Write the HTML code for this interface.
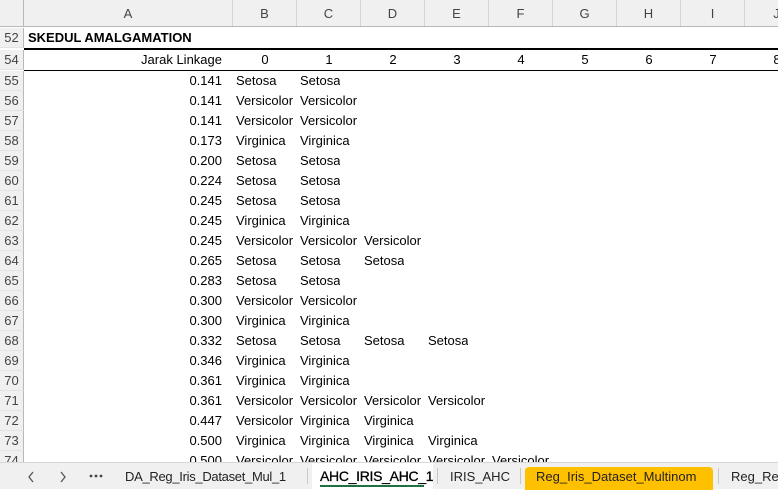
<!DOCTYPE html>
<html><head><meta charset="utf-8"><style>
*{margin:0;padding:0;box-sizing:border-box}
body{width:778px;height:489px;overflow:hidden;background:#fff;font-family:"Liberation Sans",sans-serif;font-size:13px;color:#000;position:relative}
.hdr{position:absolute;top:0;left:0;width:778px;height:27px;background:#f0f0f0;border-bottom:1px solid #b8b8b8}
.hdr div{position:absolute;top:0;height:26px;line-height:27px;text-align:center;color:#444;border-right:1px solid #d4d4d4}
.rh{position:absolute;left:0;width:24px;background:#f0f0f0;border-right:1px solid #b8b8b8;color:#444;text-align:center;line-height:20px;height:20px;border-bottom:1px solid #e4e4e4}
.c{position:absolute;height:20px;line-height:20px;white-space:nowrap;overflow:hidden}
.n{text-align:right}
.tabs{position:absolute;top:462px;left:0;width:778px;height:27px;background:#f0f0f0;border-top:1px solid #d8d8d8;font-size:13px;color:#222}
.tabs div{position:absolute;white-space:nowrap}
</style></head><body>
<div class="hdr">
<div style="left:0;width:24px;border-right:1px solid #b8b8b8"></div>
<div style="left:24px;width:209px">A</div>
<div style="left:233px;width:64px">B</div>
<div style="left:297px;width:64px">C</div>
<div style="left:361px;width:64px">D</div>
<div style="left:425px;width:64px">E</div>
<div style="left:489px;width:64px">F</div>
<div style="left:553px;width:64px">G</div>
<div style="left:617px;width:64px">H</div>
<div style="left:681px;width:64px">I</div>
<div style="left:745px;width:64px">J</div>
</div>
<div class="rh" style="top:28px">52</div>
<div class="c" style="top:28px;left:28px;font-weight:bold">SKEDUL AMALGAMATION</div>
<div style="position:absolute;left:24px;top:48px;width:754px;height:2px;background:#000"></div>
<div class="rh" style="top:50px">54</div>
<div class="c n" style="top:50px;left:24px;width:198px">Jarak Linkage</div>
<div class="c" style="top:50px;left:233px;width:64px;text-align:center">0</div>
<div class="c" style="top:50px;left:297px;width:64px;text-align:center">1</div>
<div class="c" style="top:50px;left:361px;width:64px;text-align:center">2</div>
<div class="c" style="top:50px;left:425px;width:64px;text-align:center">3</div>
<div class="c" style="top:50px;left:489px;width:64px;text-align:center">4</div>
<div class="c" style="top:50px;left:553px;width:64px;text-align:center">5</div>
<div class="c" style="top:50px;left:617px;width:64px;text-align:center">6</div>
<div class="c" style="top:50px;left:681px;width:64px;text-align:center">7</div>
<div class="c" style="top:50px;left:745px;width:64px;text-align:center">8</div>
<div style="position:absolute;left:24px;top:70px;width:754px;height:1px;background:#000"></div>

<div class="rh" style="top:71px">55</div><div class="c n" style="top:71px;left:24px;width:198px">0.141</div><div class="c" style="top:71px;left:236px;width:61px">Setosa</div><div class="c" style="top:71px;left:300px">Setosa</div>
<div class="rh" style="top:91px">56</div><div class="c n" style="top:91px;left:24px;width:198px">0.141</div><div class="c" style="top:91px;left:236px;width:61px">Versicolor</div><div class="c" style="top:91px;left:300px">Versicolor</div>
<div class="rh" style="top:111px">57</div><div class="c n" style="top:111px;left:24px;width:198px">0.141</div><div class="c" style="top:111px;left:236px;width:61px">Versicolor</div><div class="c" style="top:111px;left:300px">Versicolor</div>
<div class="rh" style="top:131px">58</div><div class="c n" style="top:131px;left:24px;width:198px">0.173</div><div class="c" style="top:131px;left:236px;width:61px">Virginica</div><div class="c" style="top:131px;left:300px">Virginica</div>
<div class="rh" style="top:151px">59</div><div class="c n" style="top:151px;left:24px;width:198px">0.200</div><div class="c" style="top:151px;left:236px;width:61px">Setosa</div><div class="c" style="top:151px;left:300px">Setosa</div>
<div class="rh" style="top:171px">60</div><div class="c n" style="top:171px;left:24px;width:198px">0.224</div><div class="c" style="top:171px;left:236px;width:61px">Setosa</div><div class="c" style="top:171px;left:300px">Setosa</div>
<div class="rh" style="top:191px">61</div><div class="c n" style="top:191px;left:24px;width:198px">0.245</div><div class="c" style="top:191px;left:236px;width:61px">Setosa</div><div class="c" style="top:191px;left:300px">Setosa</div>
<div class="rh" style="top:211px">62</div><div class="c n" style="top:211px;left:24px;width:198px">0.245</div><div class="c" style="top:211px;left:236px;width:61px">Virginica</div><div class="c" style="top:211px;left:300px">Virginica</div>
<div class="rh" style="top:231px">63</div><div class="c n" style="top:231px;left:24px;width:198px">0.245</div><div class="c" style="top:231px;left:236px;width:61px">Versicolor</div><div class="c" style="top:231px;left:300px;width:61px">Versicolor</div><div class="c" style="top:231px;left:364px">Versicolor</div>
<div class="rh" style="top:251px">64</div><div class="c n" style="top:251px;left:24px;width:198px">0.265</div><div class="c" style="top:251px;left:236px;width:61px">Setosa</div><div class="c" style="top:251px;left:300px;width:61px">Setosa</div><div class="c" style="top:251px;left:364px">Setosa</div>
<div class="rh" style="top:271px">65</div><div class="c n" style="top:271px;left:24px;width:198px">0.283</div><div class="c" style="top:271px;left:236px;width:61px">Setosa</div><div class="c" style="top:271px;left:300px">Setosa</div>
<div class="rh" style="top:291px">66</div><div class="c n" style="top:291px;left:24px;width:198px">0.300</div><div class="c" style="top:291px;left:236px;width:61px">Versicolor</div><div class="c" style="top:291px;left:300px">Versicolor</div>
<div class="rh" style="top:311px">67</div><div class="c n" style="top:311px;left:24px;width:198px">0.300</div><div class="c" style="top:311px;left:236px;width:61px">Virginica</div><div class="c" style="top:311px;left:300px">Virginica</div>
<div class="rh" style="top:331px">68</div><div class="c n" style="top:331px;left:24px;width:198px">0.332</div><div class="c" style="top:331px;left:236px;width:61px">Setosa</div><div class="c" style="top:331px;left:300px;width:61px">Setosa</div><div class="c" style="top:331px;left:364px;width:61px">Setosa</div><div class="c" style="top:331px;left:428px">Setosa</div>
<div class="rh" style="top:351px">69</div><div class="c n" style="top:351px;left:24px;width:198px">0.346</div><div class="c" style="top:351px;left:236px;width:61px">Virginica</div><div class="c" style="top:351px;left:300px">Virginica</div>
<div class="rh" style="top:371px">70</div><div class="c n" style="top:371px;left:24px;width:198px">0.361</div><div class="c" style="top:371px;left:236px;width:61px">Virginica</div><div class="c" style="top:371px;left:300px">Virginica</div>
<div class="rh" style="top:391px">71</div><div class="c n" style="top:391px;left:24px;width:198px">0.361</div><div class="c" style="top:391px;left:236px;width:61px">Versicolor</div><div class="c" style="top:391px;left:300px;width:61px">Versicolor</div><div class="c" style="top:391px;left:364px;width:61px">Versicolor</div><div class="c" style="top:391px;left:428px">Versicolor</div>
<div class="rh" style="top:411px">72</div><div class="c n" style="top:411px;left:24px;width:198px">0.447</div><div class="c" style="top:411px;left:236px;width:61px">Versicolor</div><div class="c" style="top:411px;left:300px;width:61px">Virginica</div><div class="c" style="top:411px;left:364px">Virginica</div>
<div class="rh" style="top:431px">73</div><div class="c n" style="top:431px;left:24px;width:198px">0.500</div><div class="c" style="top:431px;left:236px;width:61px">Virginica</div><div class="c" style="top:431px;left:300px;width:61px">Virginica</div><div class="c" style="top:431px;left:364px;width:61px">Virginica</div><div class="c" style="top:431px;left:428px">Virginica</div>
<div class="rh" style="top:451px">74</div><div class="c n" style="top:451px;left:24px;width:198px">0.500</div><div class="c" style="top:451px;left:236px;width:61px">Versicolor</div><div class="c" style="top:451px;left:300px;width:61px">Versicolor</div><div class="c" style="top:451px;left:364px;width:61px">Versicolor</div><div class="c" style="top:451px;left:428px;width:61px">Versicolor</div><div class="c" style="top:451px;left:492px">Versicolor</div>

<div class="tabs">
<svg style="position:absolute;left:27px;top:8px" width="8" height="12"><path d="M6 1L2 6L6 11" fill="none" stroke="#555" stroke-width="1.3"/></svg>
<svg style="position:absolute;left:59px;top:8px" width="8" height="12"><path d="M2 1L6 6L2 11" fill="none" stroke="#555" stroke-width="1.3"/></svg>
<svg style="position:absolute;left:89px;top:11px" width="14" height="4"><circle cx="2" cy="2" r="1.4" fill="#444"/><circle cx="7" cy="2" r="1.4" fill="#444"/><circle cx="12" cy="2" r="1.4" fill="#444"/></svg>
<div style="left:125px;top:6px;letter-spacing:-0.3px">DA_Reg_Iris_Dataset_Mul_1</div>
<div style="left:307px;top:5px;width:1px;height:16px;background:#c8c8c8"></div>
<div style="left:312px;top:0;width:121px;height:27px;background:#fff"></div>
<div style="left:320px;top:5px;color:#000;font-size:14px;letter-spacing:-0.3px;-webkit-text-stroke:0.3px #000">AHC_IRIS_AHC_1</div>
<div style="left:320px;top:22px;width:104px;height:2px;background:#1e7145"></div>
<div style="left:437px;top:5px;width:1px;height:16px;background:#c8c8c8"></div>
<div style="left:450px;top:6px">IRIS_AHC</div>
<div style="left:520px;top:5px;width:1px;height:16px;background:#c8c8c8"></div>
<div style="left:525px;top:4px;width:188px;height:23px;background:#ffc000;border-radius:4px 4px 0 0"></div>
<div style="left:536px;top:6px">Reg_Iris_Dataset_Multinom</div>
<div style="left:718px;top:5px;width:1px;height:16px;background:#c8c8c8"></div>
<div style="left:731px;top:6px">Reg_Reg</div>
</div>
</body></html>
